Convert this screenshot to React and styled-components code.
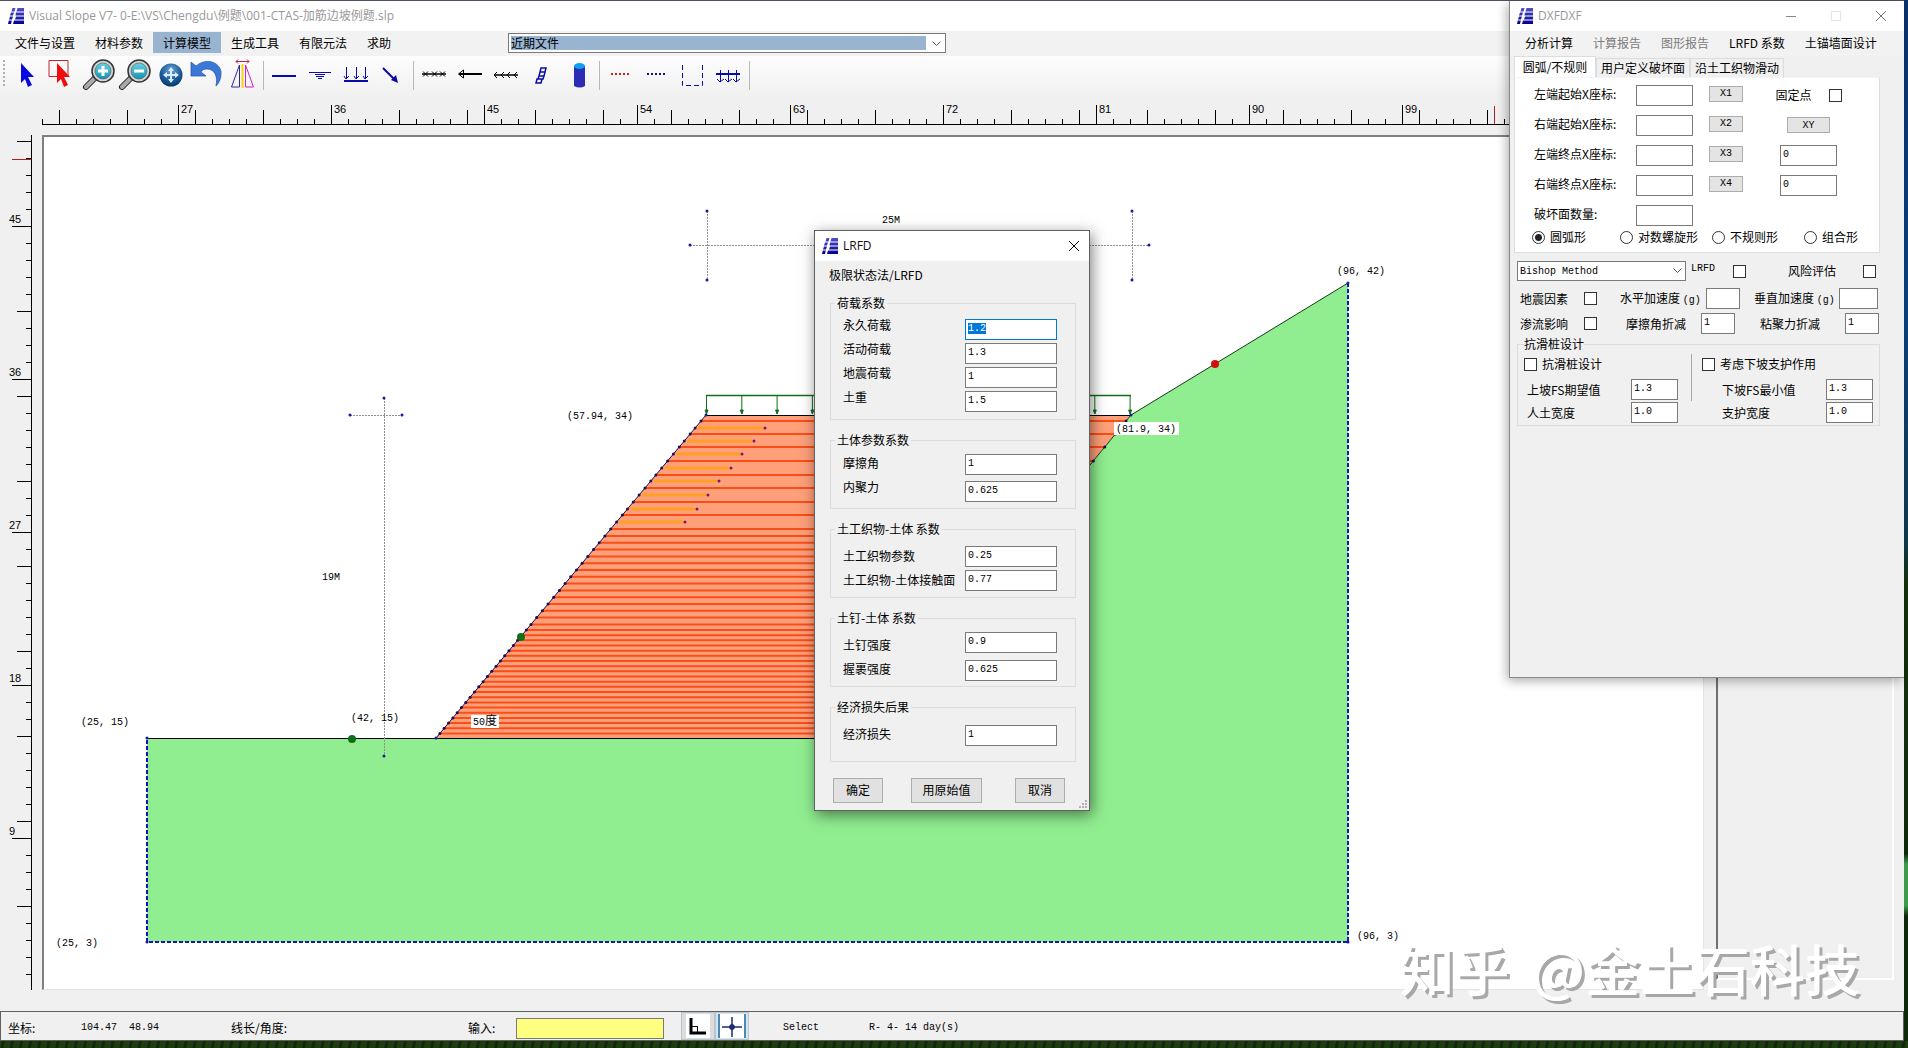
import { useEffect, useRef } from "react";
import styled, { createGlobalStyle } from "styled-components";

const Global = createGlobalStyle`
  * { box-sizing: border-box; }
  body {
    margin: 0;
    background: #16330c;
    font-family: "Noto Sans CJK SC", sans-serif;
    font-size: 12px;
    line-height: 14px;
    color: #000;
  }
  ::selection { background: #0078d7; color: #fff; }
`;

const mono = `"Liberation Mono", "Noto Sans CJK SC", monospace`;

export default function App() {
  return (
    <Desktop>
      <Global />
      <MainWindow>
        <TitleBar>
          <Logo />
          <Caption $muted>Visual Slope V7- 0-E:\VS\Chengdu\例题\001-CTAS-加筋边坡例题.slp</Caption>
        </TitleBar>
        <MenuBar>
          {["文件与设置", "材料参数", "计算模型", "生成工具", "有限元法", "求助"].map((m) => (
            <MenuItem key={m} $active={m === "计算模型"}>{m}</MenuItem>
          ))}
          <RecentBox>
            <RecentSelect aria-label="近期文件">
              <option>近期文件</option>
            </RecentSelect>
            <Chevron />
          </RecentBox>
        </MenuBar>
        <Tools />
        <TopRuler />
        <Work>
          <SideRuler />
          <Canvas><Drawing /></Canvas>
          <SidePanel />
        </Work>
        <Status />
      </MainWindow>
      <Edge />
      <AnalysisWindow />
      <LrfdDialog />
      <Watermark><span>知乎</span><span>@金土石科技</span></Watermark>
    </Desktop>
  );
}

/* ---------- shared pieces ---------- */

function Logo() {
  return (
    <svg width="16" height="16" viewBox="0 0 16 16">
      <defs>
        <linearGradient id="logo" x1="0" y1="0" x2="0" y2="16" gradientUnits="userSpaceOnUse">
          <stop offset="0" stopColor="#5050c8" />
          <stop offset="1" stopColor="#00008c" />
        </linearGradient>
      </defs>
      <g fill="url(#logo)">
        <path d="M4.500 0h3l-1 3.500h-3zM9.500 0H16v3.500H8.500z" />
        <path d="M3 4.500h3L5 7.500H2zM8 4.500h8v3H7.500z" />
        <path d="M2 8.500h3l-1 3H1zM8 8.500h8v3H7z" />
        <path d="M.8 12.500h3L3 16H0zM6 12.500h10V16H5z" />
      </g>
    </svg>
  );
}

function Chevron() {
  return (
    <ChevronSvg width="9" height="6" viewBox="0 0 9 6" fill="none" stroke="#555">
      <path d="M.5 .5l4 4 4-4" />
    </ChevronSvg>
  );
}

function Check({ id, label }) {
  return (
    <CheckLabel htmlFor={id}>
      <CheckBox type="checkbox" id={id} />
      {label}
    </CheckLabel>
  );
}

/* ---------- toolbar ---------- */

const navy = "#0a0aa8";

const toolGroups = [
  [
    ["选择", <path key="a" d="M13 7l13 14h-6l4 8-4 2-3-8-4 4z" fill="#0808e0" />],
    ["框选", (
      <g key="b">
        <path d="M5 4.500h19v16H5z" fill="none" stroke="#c8202c" />
        <path d="M13 7l13 14h-6l4 8-4 2-3-8-4 4z" fill="#f00c0c" />
      </g>
    )],
    ["放大", <Lens key="c" plus />],
    ["缩小", <Lens key="d" />],
    ["平移", (
      <g key="e">
        <circle cx="19" cy="19" r="11.500" fill="url(#ball)" />
        <path d="M19 11l3 4h-2v3h3v-2l4 3-4 3v-2h-3v3h2l-3 4-3-4h2v-3h-3v2l-4-3 4-3v2h3v-3h-2z" fill="#d8ecf8" />
      </g>
    )],
    ["撤销", (
      <path key="f" d="M3 6l5 4c12-10 26-2 25 8 0 5-2 9-5 12 2-9-1-17-9-17-3 0-5 1-6 3l5 4H3z" fill="#3c78d8" stroke="#1c50a0" strokeWidth=".7" />
    )],
    ["镜像", (
      <g key="g" fill="none">
        <path d="M15.500 9v22H7.500z" stroke="#2828a0" />
        <path d="M21.500 9v22h8z" stroke="#d020d0" />
        <path d="M18.500 8v24" stroke="#f8d800" strokeWidth="2" />
        <path d="M12 5.500h13M14 3.500l-2 2 2 2M23 3.500l2 2-2 2" stroke="#c02040" />
      </g>
    )],
  ],
  [
    ["直线", <path key="a" d="M6 20h24" stroke={navy} strokeWidth="2" />],
    ["水位", <path key="b" d="M7 16.500h22M13 18.500h10M14 20.500h8M16 22.500h4" stroke={navy} />],
    ["荷载", (
      <g key="c" fill="none" stroke={navy}>
        <path d="M8.500 11v12M18.500 11v12M27.500 11v12M6 20l2 3 3-3M16 20l2 3 3-3M25 20l2 3 3-3" />
        <path d="M6 25h24" strokeWidth="2" />
      </g>
    )],
    ["斜线", (
      <g key="d">
        <path d="M9 12l12 12" stroke={navy} strokeWidth="2" />
        <path d="M24 27l-7-3 5-5z" fill={navy} />
      </g>
    )],
  ],
  [
    ["锚固", (
      <g key="a" stroke="#000">
        <path d="M6 18h24" strokeWidth="1.500" />
        <path d="M7 15.500l5 5M12 15.500l-5 5M16 15.500l5 5M21 15.500l-5 5M24 15.500l5 5M29 15.500l-5 5" fill="none" />
      </g>
    )],
    ["锚杆", (
      <g key="b" stroke="#000">
        <path d="M7 18h23" strokeWidth="2" />
        <path d="M11.500 14v8l-5-4z" fill="none" />
      </g>
    )],
    ["土钉", (
      <g key="c" stroke="#000" fill="none">
        <path d="M6 19h24" strokeWidth="1.500" />
        <path d="M9 16l-3 3 3 3M16 16l-3 3 3 3M22 16l-3 3 3 3M29 16l-3 3 3 3" />
      </g>
    )],
    ["挡墙", (
      <g key="d" fill="none" stroke={navy} strokeWidth="1.500">
        <path d="M17 12h5l-1 4h-5zM16 16h5l-1 4h-5zM15 20h5l-1 3h-5zM13 23h5l-1 4h-5z" />
      </g>
    )],
    ["桩", (
      <g key="e">
        <path d="M14 10h11v20q-5 3-11 0z" fill="#2c2cb4" />
        <ellipse cx="19.500" cy="10" rx="5.500" ry="3" fill="#10a0f0" />
      </g>
    )],
  ],
  [
    ["红点线", <path key="a" d="M9 18h19" stroke="#c02828" strokeWidth="2" strokeDasharray="2 2" />],
    ["蓝点线", <path key="b" d="M9 18h19" stroke="#101080" strokeWidth="2" strokeDasharray="2 2" />],
    ["边界", <path key="c" d="M8.500 9v20.500h20V9" fill="none" stroke={navy} strokeDasharray="5 3" />],
    ["均布荷载", (
      <g key="d" stroke={navy} fill="none">
        <path d="M6 18h24" strokeWidth="2" />
        <path d="M10.500 14v12M18.500 14v12M26.500 14v12M7 23l3 3 4-3M15 23l3 3 4-3M23 23l3 3 4-3" />
      </g>
    )],
  ],
];

function Lens({ plus }) {
  return (
    <g>
      <path d="M6 31l9-9" stroke="#222" strokeWidth="6" strokeLinecap="round" />
      <path d="M6 31l9-9" stroke="#aaa" strokeWidth="4" strokeLinecap="round" />
      <circle cx="23" cy="15" r="11" fill="#cfd4d6" stroke="#333" strokeWidth="1.500" />
      <circle cx="23" cy="15" r="8" fill="url(#glass)" stroke="#555" strokeWidth=".6" />
      <path d={plus ? "M18 15h10M23 10v10" : "M18 15h10"} stroke="#fff" strokeWidth="3" />
    </g>
  );
}

function Tools() {
  return (
    <ToolBar>
      <svg width="0" height="0">
        <defs>
          <radialGradient id="ball" cx=".5" cy=".3" r=".7">
            <stop offset="0" stopColor="#70a8d0" />
            <stop offset=".6" stopColor="#1c5c9c" />
            <stop offset="1" stopColor="#083868" />
          </radialGradient>
          <linearGradient id="glass" x1="0" y1="0" x2="0" y2="1">
            <stop offset="0" stopColor="#6cd0e4" />
            <stop offset="1" stopColor="#1494b4" />
          </linearGradient>
        </defs>
      </svg>
      <Grip />
      {toolGroups.map((group, i) => (
        <ToolGroup key={i}>
          {group.map(([name, icon]) => (
            <ToolButton key={name} aria-label={name}>
              <svg width="36" height="36">{icon}</svg>
            </ToolButton>
          ))}
        </ToolGroup>
      ))}
    </ToolBar>
  );
}

/* ---------- rulers: one unit is 17px ---------- */

const range = (n) => Array.from({ length: n }, (_, i) => i);

function TopRuler() {
  return (
    <TopRulerSvg>
      <g stroke="#000" shapeRendering="crispEdges">
        <path d="M42 27.500H1900" />
        {range(109).map((i) => {
          const major = i % 9 === 8;
          const top = major ? 8 : i % 4 === 1 ? 13 : 22;
          return <path key={i} d={`M${42.5 + i * 17} ${top}V27`} />;
        })}
        <path d="M1494.500 9V27" stroke="#b02020" />
      </g>
      {range(9).map((k) => (
        <text key={k} x={181 + k * 153} y="16">{27 + k * 9}</text>
      ))}
    </TopRulerSvg>
  );
}

function SideRuler() {
  return (
    <SideRulerSvg>
      <g stroke="#000" shapeRendering="crispEdges">
        <path d="M31.500 0V856" />
        {range(50).map((i) => {
          const major = i % 9 === 5;
          const left = major ? 12 : i % 5 === 0 ? 17 : 26;
          return <path key={i} d={`M${left} ${6.5 + i * 17}H31`} />;
        })}
        <path d="M12 24.500H31" stroke="#b02020" />
      </g>
      {range(5).map((k) => (
        <text key={k} x="9" y={88 + k * 153}>{45 - k * 9}</text>
      ))}
    </SideRulerSvg>
  );
}

/* ---------- slope model ---------- */

const crest = [706, 415];
const toe = [436, 738];
const faceX = (y) => crest[0] + ((y - crest[1]) * (toe[0] - crest[0])) / (toe[1] - crest[1]);
const backX = (y) => 1131 - (y - 415) * 0.82;

const wide = [421, 434, 447, 461, 475, 488, 502, 515, 529];
const mid = range(14).map((i) => 536 + i * 6.8);
const dense = range(21).map((i) => 630 + i * 5.17);
const layers = [...wide, ...mid, ...dense];
const shortLayers = [[428, 765], [441, 754], [454, 742], [468, 731], [481, 719], [495, 708], [509, 697], [522, 685]];

function Label({ x, y, box, children }) {
  return (
    <g>
      {box && <rect x={x - 2} y={y - 10} width={box} height="13" fill="#fff" />}
      <text x={x} y={y}>{children}</text>
    </g>
  );
}

function Drawing() {
  return (
    <DrawingSvg>
      <g transform="translate(-44 -137)">
        <path d="M147 738L866 738L1131 415L1348 283V942H147z" fill="#90ee90" />
        <path d="M706 415H1131L866 738H436z" fill="#ffa07a" />
        {layers.map((y) => (
          <path key={y} d={`M${faceX(y)} ${y}H${backX(y)}`} stroke="#fa4e18" strokeWidth="2" />
        ))}
        {shortLayers.map(([y, x]) => (
          <g key={y}>
            <path d={`M${faceX(y) + 3} ${y}H${x - 2}`} stroke="#ffa024" strokeWidth="3" />
            <circle cx={x} cy={y} r="1.500" fill="#702060" />
            <circle cx={faceX(y)} cy={y} r="1.500" fill="#201060" />
          </g>
        ))}
        <path d="M706 415.500H1131M147 738.500H866" stroke="#000" />
        <path d="M1131 415L866 738M1131 415L1348 283" stroke="#143c14" />
        <path d="M706 415L436 738" stroke="#201040" />
        {layers.map((y) => (
          <g key={y} fill="#101060">
            <circle cx={faceX(y)} cy={y} r="1.500" />
            <circle cx={backX(y)} cy={y} r="1.500" />
          </g>
        ))}
        <path d="M1348 283V942H147V738" fill="none" stroke="#1414c0" strokeWidth="2" strokeDasharray="4 2" />

        <g stroke="#107018" fill="#107018">
          <path d="M706 395.500H1131" strokeWidth="1.500" />
          {range(13).map((i) => {
            const x = 706.5 + i * 35.3;
            return <path key={i} d={`M${x} 395V414M${x - 1.5} 410h3l-1.500 4z`} />;
          })}
        </g>

        <g stroke="#909090" strokeDasharray="2 1" shapeRendering="crispEdges">
          <path d="M690 245.500H1149M707.500 211V280M1132.500 211V280" />
          <path d="M350 415.500H402M384.500 398V756" />
        </g>
        {[[690, 245], [1149, 245], [707, 211], [707, 280], [1132, 211], [1132, 280],
          [350, 415], [402, 415], [384, 398], [384, 756], [147, 738], [436, 738],
          [706, 415], [1131, 415], [1348, 283], [147, 942], [1348, 942]].map(([x, y]) => (
          <circle key={`${x}-${y}`} cx={x} cy={y} r="1.500" fill="#1818a0" />
        ))}
        <circle cx="352" cy="739" r="4" fill="#107018" />
        <circle cx="521" cy="637" r="4" fill="#107018" />
        <circle cx="1215" cy="364" r="4" fill="#d01010" />

        <Label x={882} y={223}>25M</Label>
        <Label x={322} y={580}>19M</Label>
        <Label x={567} y={419}>(57.94, 34)</Label>
        <Label x={1116} y={432} box={65}>(81.9, 34)</Label>
        <Label x={1337} y={274}>(96, 42)</Label>
        <Label x={81} y={725}>(25, 15)</Label>
        <Label x={351} y={721}>(42, 15)</Label>
        <Label x={56} y={946}>(25, 3)</Label>
        <Label x={1357} y={939}>(96, 3)</Label>
        <Label x={473} y={725} box={28}>50<tspan fontSize="12">度</tspan></Label>
      </g>
    </DrawingSvg>
  );
}

/* ---------- status bar ---------- */

function Status() {
  return (
    <StatusBar>
      <StatusCell $w={73}>坐标:</StatusCell>
      <StatusCell $w={150} $mono>104.47&nbsp; 48.94</StatusCell>
      <StatusCell $w={237}>线长/角度:</StatusCell>
      <StatusCell as="label" htmlFor="command" $w={48}>输入:</StatusCell>
      <CommandInput id="command" />
      <ModeButton aria-label="正交">
        <svg width="24" height="24" viewBox="0 0 24 24" fill="none" stroke="#000">
          <path fill="#fff" stroke="none" d="M0 0h24v24H0z" />
          <path d="M5 4v15h15" strokeWidth="3" />
          <path d="M6 12.500h5.500V18" />
        </svg>
      </ModeButton>
      <ModeButton aria-label="捕捉" $on>
        <svg width="28" height="24" viewBox="0 0 28 24" fill="none" stroke="#1c2c70">
          <path fill="#fff" stroke="none" d="M0 0h28v24H0z" />
          <path d="M1 0v24M27 0v24" stroke="#4c88b8" strokeWidth="2" />
          <path d="M4 13h20M14 3v20" strokeWidth="1.500" />
          <circle cx="14" cy="13" r="2.500" fill="#1c2c70" />
        </svg>
      </ModeButton>
      <StatusCell $w={86} $mono $pad={34}>Select</StatusCell>
      <StatusCell $w={130} $mono $pad={34}>R- 4- 14 day(s)</StatusCell>
    </StatusBar>
  );
}

/* ---------- analysis window ---------- */

const coordRows = [
  ["左端起始X座标:", "X1"],
  ["右端起始X座标:", "X2"],
  ["左端终点X座标:", "X3"],
  ["右端终点X座标:", "X4"],
  ["破坏面数量:", null],
];

function AnalysisWindow() {
  const extra = [
    <FixedPoint key="p" htmlFor="fixed">固定点<CheckBox type="checkbox" id="fixed" /></FixedPoint>,
    <SmallButton key="b" $w={43}>XY</SmallButton>,
    <TextBox key="x" aria-label="X" defaultValue="0" $w={57} />,
    <TextBox key="y" aria-label="Y" defaultValue="0" $w={57} />,
    null,
  ];
  return (
    <Tool>
      <TitleBar $inner>
        <Logo />
        <Caption $muted>DXFDXF</Caption>
        <WindowButtons>
          <button aria-label="最小化"><svg width="12" height="12" stroke="#888"><path d="M1 6.500h10" /></svg></button>
          <button aria-label="最大化"><svg width="12" height="12" stroke="#e4e4e4" fill="none"><path d="M1.500 1.500h9v9h-9z" /></svg></button>
          <button aria-label="关闭"><svg width="12" height="12" stroke="#777"><path d="M1 1l10 10M11 1L1 11" /></svg></button>
        </WindowButtons>
      </TitleBar>
      <MenuBar>
        <MenuItem>分析计算</MenuItem>
        <MenuItem disabled>计算报告</MenuItem>
        <MenuItem disabled>图形报告</MenuItem>
        <MenuItem>LRFD 系数</MenuItem>
        <MenuItem>土锚墙面设计</MenuItem>
      </MenuBar>
      <ToolBody>
        <Tabs role="tablist">
          <Tab role="tab" aria-selected="true" $on $w={82}>圆弧/不规则</Tab>
          <Tab role="tab" aria-selected="false" $w={94}>用户定义破坏面</Tab>
          <Tab role="tab" aria-selected="false" $w={94}>沿土工织物滑动</Tab>
        </Tabs>
        <TabPage>
          {coordRows.map(([label, btn], i) => (
            <CoordRow key={label}>
              <label htmlFor={`coord${i}`}>{label}</label>
              <TextBox id={`coord${i}`} $w={57} />
              {btn ? <SmallButton $w={34}>{btn}</SmallButton> : <span />}
              <Extra>{extra[i]}</Extra>
            </CoordRow>
          ))}
          <Radios>
            {["圆弧形", "对数螺旋形", "不规则形", "组合形"].map((r, i) => (
              <RadioLabel key={r}>
                <Radio type="radio" name="shape" defaultChecked={i === 0} />
                {r}
              </RadioLabel>
            ))}
          </Radios>
        </TabPage>

        <MethodRow>
          <MethodBox>
            <MethodSelect aria-label="Method"><option>Bishop Method</option></MethodSelect>
            <Chevron />
          </MethodBox>
          <MonoLabel htmlFor="lrfd">LRFD</MonoLabel>
          <CheckBox type="checkbox" id="lrfd" />
          <label htmlFor="risk">风险评估</label>
          <CheckBox type="checkbox" id="risk" />
        </MethodRow>
        <FactorRow>
          <label htmlFor="quake">地震因素</label>
          <CheckBox type="checkbox" id="quake" />
          <label htmlFor="ah">水平加速度 <Unit>(g)</Unit></label>
          <TextBox id="ah" $w={34} />
          <label htmlFor="av">垂直加速度 <Unit>(g)</Unit></label>
          <TextBox id="av" $w={39} />
        </FactorRow>
        <FactorRow $wide>
          <label htmlFor="seep">渗流影响</label>
          <CheckBox type="checkbox" id="seep" />
          <label htmlFor="phi">摩擦角折减</label>
          <TextBox id="phi" defaultValue="1" $w={34} />
          <label htmlFor="coh">粘聚力折减</label>
          <TextBox id="coh" defaultValue="1" $w={34} />
        </FactorRow>

        <PileSet>
          <legend>抗滑桩设计</legend>
          <PileHalves>
            <PileHalf $w={167}>
              <Check id="pile" label="抗滑桩设计" />
              <PileRow><label htmlFor="fs1">上坡FS期望值</label><TextBox id="fs1" defaultValue="1.3" $w={47} /></PileRow>
              <PileRow><label htmlFor="w1">人土宽度</label><TextBox id="w1" defaultValue="1.0" $w={47} /></PileRow>
            </PileHalf>
            <Divider />
            <PileHalf $w={171}>
              <Check id="down" label="考虑下坡支护作用" />
              <PileRow $indent><label htmlFor="fs2">下坡FS最小值</label><TextBox id="fs2" defaultValue="1.3" $w={47} /></PileRow>
              <PileRow $indent><label htmlFor="w2">支护宽度</label><TextBox id="w2" defaultValue="1.0" $w={47} /></PileRow>
            </PileHalf>
          </PileHalves>
        </PileSet>
      </ToolBody>
    </Tool>
  );
}

/* ---------- LRFD dialog ---------- */

const groups = [
  { title: "荷载系数", top: 3, boxTop: 9, gap: 3, height: 124, rows: [["永久荷载", "1.2"], ["活动荷载", "1.3"], ["地震荷载", "1"], ["土重", "1.5"]] },
  { title: "土体参数系数", top: 4, boxTop: 7, gap: 6, height: 76, rows: [["摩擦角", "1"], ["内聚力", "0.625"]] },
  { title: "土工织物-土体 系数", top: 8, boxTop: 10, gap: 3, height: 76, rows: [["土工织物参数", "0.25"], ["土工织物-土体接触面", "0.77"]] },
  { title: "土钉-土体 系数", top: 8, boxTop: 7, gap: 7, height: 76, rows: [["土钉强度", "0.9"], ["握裹强度", "0.625"]] },
  { title: "经济损失后果", top: 8, boxTop: 11, gap: 3, height: 62, rows: [["经济损失", "1"]] },
];

function LrfdDialog() {
  const first = useRef(null);
  useEffect(() => {
    first.current.focus();
    first.current.select();
  }, []);
  return (
    <Dialog role="dialog" aria-label="LRFD">
      <TitleBar $inner>
        <Logo />
        <Caption>LRFD</Caption>
        <CloseButton aria-label="关闭">
          <svg width="12" height="12" stroke="#000"><path d="M1 1l10 10M11 1L1 11" /></svg>
        </CloseButton>
      </TitleBar>
      <DialogBody>
        <Heading>极限状态法/LRFD</Heading>
        {groups.map((g, gi) => (
          <Group key={g.title} $h={g.height}>
            <legend>{g.title}</legend>
            <Fields>
              <Names $top={g.top}>
                {g.rows.map(([name], i) => <label key={name} htmlFor={`f${gi}${i}`}>{name}</label>)}
              </Names>
              <Boxes $top={g.boxTop} $gap={g.gap}>
                {g.rows.map(([name, value], i) => (
                  <TextBox key={name} id={`f${gi}${i}`} defaultValue={value} $w={92}
                    ref={gi === 0 && i === 0 ? first : null} />
                ))}
              </Boxes>
            </Fields>
          </Group>
        ))}
        <Buttons>
          <PushButton $w={50}>确定</PushButton>
          <PushButton $w={71}>用原始值</PushButton>
          <PushButton $w={50}>取消</PushButton>
        </Buttons>
      </DialogBody>
      <SizeGrip width="9" height="9" fill="#b0b0b0">
        <path d="M6 0h2v2h-2zM3 3h2v2h-2zM6 3h2v2h-2zM0 6h2v2h-2zM3 6h2v2h-2zM6 6h2v2h-2z" />
      </SizeGrip>
    </Dialog>
  );
}

/* ---------- styles ---------- */

const Desktop = styled.div`
  position: relative;
  display: flex;
  height: 100vh;
  padding-bottom: 7px;
  overflow: hidden;
  background:
    repeating-linear-gradient(100deg, #ffffff08 0 2px, #00000040 3px 5px, #40802018 6px 9px),
    #17350b;
`;
const MainWindow = styled.div`
  flex: 1;
  min-width: 0;
  display: flex;
  flex-direction: column;
  background: #f0f0f0;
  border-top: 1px solid #4c5260;
`;
const Edge = styled.div`
  width: 4px;
  background: linear-gradient(#0a3470, #0c4484 30%, #123c50 52%, #16340c 56%, #10280a 82%, #3c9c4c 83%, #3c9c4c 87%, #10280a 88%);
`;
const TitleBar = styled.header`
  height: 30px;
  flex: none;
  display: flex;
  align-items: center;
  gap: 5px;
  padding-left: ${(p) => (p.$inner ? "7px" : "8px")};
  background: #fff;
`;
const Caption = styled.span`
  font-family: "Open Sans", "Noto Sans CJK SC", sans-serif;
  font-size: 12px;
  color: ${(p) => (p.$muted ? "#999" : "#111")};
`;
const MenuBar = styled.nav`
  height: 25px;
  flex: none;
  display: flex;
  align-items: center;
  padding: 0 0 2px 5px;
  background: #f2f2f2;
`;
const MenuItem = styled.button`
  height: 21px;
  padding: 0 10px;
  border: 0;
  font: inherit;
  white-space: nowrap;
  color: #000;
  background: ${(p) => (p.$active ? "#99b4d1" : "transparent")};
  &:disabled { color: #7c7c7c; }
`;
const ChevronSvg = styled.svg`
  position: absolute;
  right: 4px;
  top: 7px;
  pointer-events: none;
`;
const RecentBox = styled.div`
  position: relative;
  width: 438px;
  height: 20px;
  margin-left: 107px;
  padding: 2px;
  border: 1px solid #7a7a7a;
  background: #fff;
`;
const RecentSelect = styled.select`
  appearance: none;
  display: block;
  width: 100%;
  height: 14px;
  padding: 0;
  border: 0;
  outline: 0;
  font: inherit;
  line-height: 14px;
  color: #000;
  background: linear-gradient(to left, #fff 17px, #99b4d1 17px);
`;
const ToolBar = styled.div`
  height: 41px;
  flex: none;
  display: flex;
  align-items: flex-start;
  background: linear-gradient(#fdfdfd, #f0f0f0);
`;
const Grip = styled.div`
  width: 8px;
  height: 28px;
  margin-top: 4px;
  background: repeating-linear-gradient(#b0b0b0 0 2px, transparent 2px 4px) 3px 0 / 2px 100% no-repeat;
`;
const ToolGroup = styled.div`
  display: flex;
  padding-right: 6px;
  background: linear-gradient(#b8b8b8, #b8b8b8) right 2px top 5px / 1px 29px no-repeat;
`;
const ToolButton = styled.button`
  width: 36px;
  height: 36px;
  padding: 0;
  border: 0;
  background: none;
  svg { display: block; overflow: visible; }
`;
const TopRulerSvg = styled.svg`
  flex: none;
  width: 100%;
  height: 38px;
  font: 11px "Liberation Sans", sans-serif;
`;
const SideRulerSvg = styled.svg`
  flex: none;
  width: 42px;
  height: 100%;
  font: 11px "Liberation Sans", sans-serif;
`;
const Work = styled.div`
  flex: 1;
  min-height: 0;
  display: flex;
  padding: 0 10px 21px 0;
`;
const Canvas = styled.main`
  flex: 1;
  min-width: 0;
  background: #fff;
  border: 2px solid #808080;
  border-right: 1px solid #e3e3e3;
  border-bottom: 1px solid #e3e3e3;
`;
const DrawingSvg = styled.svg`
  display: block;
  width: 100%;
  height: 100%;
  fill: #000;
  font: 10px ${mono};
`;
const SidePanel = styled.aside`
  width: 178px;
  margin: 0 0 10px 12px;
  border: 2px solid #fff;
  border-left-color: #707070;
`;
const StatusBar = styled.footer`
  height: 30px;
  flex: none;
  display: flex;
  align-items: center;
  padding-left: 7px;
  border: 1px solid #606060;
`;
const StatusCell = styled.span`
  width: ${(p) => p.$w}px;
  padding: 3px 0 0 ${(p) => p.$pad || 0}px;
  white-space: nowrap;
  ${(p) => p.$mono && `font: 10px ${mono};`}
`;
const CommandInput = styled.input`
  width: 148px;
  height: 21px;
  margin: 4px 17px 0 0;
  border: 1px solid #7a7a7a;
  background: #ffff80;
`;
const ModeButton = styled.button`
  width: 34px;
  height: 28px;
  padding: 1px 2px;
  border: 1px solid #b8c4d0;
  background: ${(p) => (p.$on ? "#d8e4ec" : "#dcdcdc")};
  svg { display: block; margin: auto; }
`;
const TextBox = styled.input.attrs({ type: "text" })`
  width: ${(p) => p.$w}px;
  height: 21px;
  padding: 0 2px 2px;
  border: 1px solid #7a7a7a;
  outline: 0;
  background: #fff;
  color: #000;
  font: 10px ${mono};
  &:focus { border-color: #0078d7; }
`;
const CheckBox = styled.input`
  appearance: none;
  width: 13px;
  height: 13px;
  margin: 0;
  border: 1px solid #333;
  background: #fff;
`;
const CheckLabel = styled.label`
  display: flex;
  align-items: center;
  gap: 5px;
  height: 20px;
  margin-bottom: 4px;
  white-space: nowrap;
`;
const Radio = styled.input`
  appearance: none;
  width: 13px;
  height: 13px;
  margin: 0;
  border: 1px solid #333;
  border-radius: 50%;
  background: #fff;
  &:checked { background: radial-gradient(#222 0 3px, #fff 4px); }
`;
const SmallButton = styled.button`
  width: ${(p) => p.$w}px;
  height: 16px;
  padding: 0;
  border: 1px solid #adadad;
  background: #e4e4e4;
  font: 10px ${mono};
`;
const Unit = styled.span`
  font: 10px ${mono};
`;

const Tool = styled.section`
  position: absolute;
  top: 1px;
  right: 4px;
  width: 395px;
  height: 677px;
  background: #f0f0f0;
  border-left: 1px solid #888;
  border-bottom: 1px solid #888;
  box-shadow: -2px 3px 10px #00000050;
`;
const WindowButtons = styled.div`
  display: flex;
  gap: 33px;
  margin-left: auto;
  padding-right: 17px;
  button { padding: 0; border: 0; background: none; }
  svg { display: block; }
`;
const ToolBody = styled.div`
  padding: 0 24px 0 4px;
`;
const Tabs = styled.div`
  display: flex;
  align-items: flex-end;
  height: 21px;
`;
const Tab = styled.button`
  width: ${(p) => p.$w}px;
  height: ${(p) => (p.$on ? 21 : 19)}px;
  padding: 0 0 1px;
  border: 1px solid #dcdcdc;
  border-bottom: 0;
  background: ${(p) => (p.$on ? "#fff" : "#f0f0f0")};
  font: inherit;
  white-space: nowrap;
`;
const TabPage = styled.div`
  height: 176px;
  padding: 2px 0 0 17px;
  background: #fff;
  border: 1px solid #dcdcdc;
  border-top-color: #f4f4f4;
`;
const CoordRow = styled.div`
  display: grid;
  grid-template-columns: 102px 73px 70px 1fr;
  align-items: center;
  height: 30px;
  padding-left: 2px;
  & > label { padding-bottom: 2px; }
  & > button { margin-bottom: 3px; }
`;
const Extra = styled.div`
  width: 59px;
  display: flex;
  align-items: center;
  justify-content: center;
`;
const FixedPoint = styled.label`
  display: flex;
  align-items: center;
  gap: 17px;
  white-space: nowrap;
`;
const Radios = styled.div`
  display: grid;
  grid-template-columns: 88px 92px 92px 1fr;
`;
const RadioLabel = styled.label`
  display: flex;
  align-items: center;
  gap: 5px;
  white-space: nowrap;
`;
const MethodRow = styled.div`
  display: grid;
  grid-template-columns: 174px 42px 55px 75px 13px;
  align-items: center;
  padding: 8px 0 0 3px;
`;
const MethodBox = styled.div`
  position: relative;
  width: 169px;
`;
const MethodSelect = styled.select`
  appearance: none;
  display: block;
  width: 100%;
  height: 20px;
  padding: 0 2px;
  border: 1px solid #7a7a7a;
  border-radius: 0;
  background: #fff;
  color: #000;
  font: 10px ${mono};
`;
const MonoLabel = styled.label`
  padding-bottom: 6px;
  font: 10px ${mono};
`;
const FactorRow = styled.div`
  display: grid;
  grid-template-columns: ${(p) => (p.$wide ? "64px 42px 75px 59px 85px 34px" : "64px 36px 86px 48px 85px 39px")};
  align-items: center;
  height: 25px;
  margin-top: ${(p) => (p.$wide ? 0 : 5)}px;
  padding-left: 6px;
  white-space: nowrap;
`;
const PileSet = styled.fieldset`
  height: 89px;
  margin: 1px 0 0 3px;
  padding: 0 6px;
  border: 1px solid #dcdcdc;
  legend { padding: 0; }
`;
const PileHalves = styled.div`
  display: flex;
  padding-top: 3px;
`;
const PileHalf = styled.div`
  flex: none;
  width: ${(p) => p.$w}px;
`;
const Divider = styled.div`
  width: 1px;
  height: 47px;
  margin-right: 10px;
  background: #a8a8a8;
`;
const PileRow = styled.div`
  display: flex;
  justify-content: space-between;
  align-items: center;
  height: 23px;
  padding: ${(p) => (p.$indent ? "0 0 0 20px" : "0 13px 0 3px")};
`;

const Dialog = styled.section`
  position: absolute;
  left: 814px;
  top: 230px;
  width: 276px;
  background: #f0f0f0;
  border: 1px solid #606060;
  box-shadow: 2px 4px 14px #00000080;
`;
const CloseButton = styled.button`
  margin-left: auto;
  padding: 0 9px 0 0;
  border: 0;
  background: none;
  svg { display: block; }
`;
const DialogBody = styled.div`
  display: flex;
  flex-direction: column;
  gap: 13px;
  padding: 7px 13px 7px 14px;
`;
const Heading = styled.h1`
  margin: 0 0 1px;
  font-size: 12px;
  font-weight: 400;
  line-height: 14px;
`;
const Group = styled.fieldset`
  height: ${(p) => p.$h}px;
  margin: 0 0 0 1px;
  padding: 0 18px 0 12px;
  border: 1px solid #dcdcdc;
  legend { margin-left: -8px; padding: 0 2px; }
`;
const Fields = styled.div`
  display: flex;
  justify-content: space-between;
`;
const Names = styled.div`
  padding-top: ${(p) => p.$top}px;
  label { display: block; line-height: 24px; white-space: nowrap; }
`;
const Boxes = styled.div`
  display: flex;
  flex-direction: column;
  gap: ${(p) => p.$gap}px;
  padding-top: ${(p) => p.$top}px;
`;
const Buttons = styled.div`
  display: flex;
  gap: 28px;
  padding: 3px 11px 0 4px;
  & > :last-child { margin-left: auto; }
`;
const PushButton = styled.button`
  width: ${(p) => p.$w}px;
  height: 25px;
  padding: 0 0 1px;
  border: 1px solid #adadad;
  background: #e1e1e1;
  font: inherit;
`;
const SizeGrip = styled.svg`
  position: absolute;
  right: 1px;
  bottom: 1px;
`;
const Watermark = styled.div`
  position: absolute;
  right: 48px;
  bottom: 51px;
  display: flex;
  gap: 22px;
  font-size: 55px;
  font-weight: 500;
  line-height: 60px;
  color: #fff;
  text-shadow: 3px 3px 0 #a8a8a8;
  pointer-events: none;
`;
